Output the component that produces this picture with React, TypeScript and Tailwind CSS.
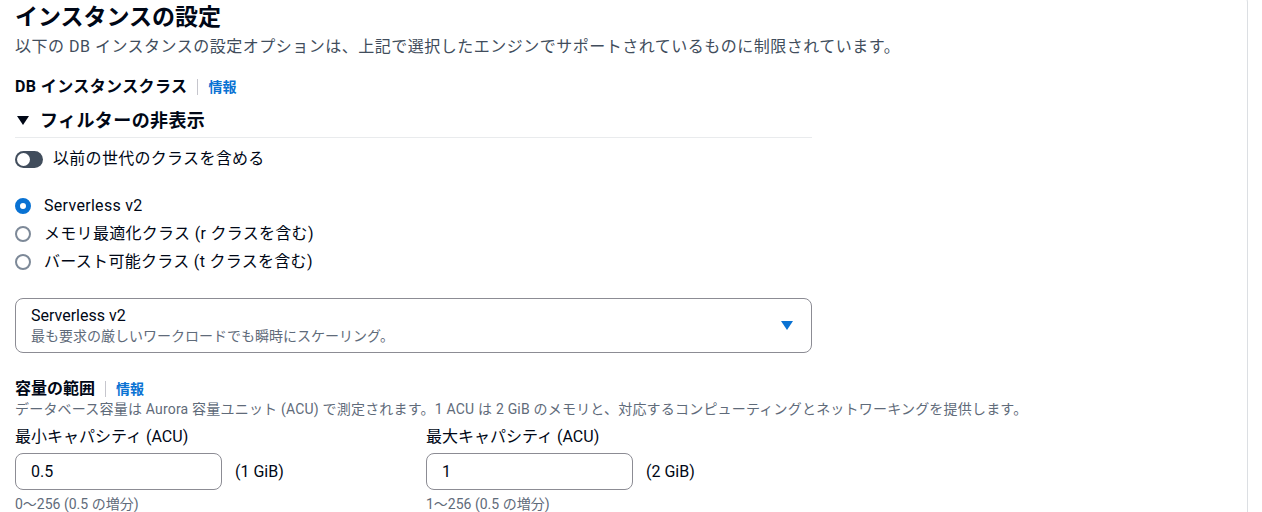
export default function App() {
  const radios = [
    { label: 'Serverless v2', checked: true },
    { label: 'メモリ最適化クラス (r クラスを含む)', checked: false },
    { label: 'バースト可能クラス (t クラスを含む)', checked: false },
  ];

  return (
    <div className="h-[512px] w-[1262px] overflow-hidden bg-white font-[family-name:Roboto,'Noto_Sans_CJK_JP',sans-serif] text-[#000716]">
      <div className="-ml-[8px] -mt-[14px] w-[1256px] rounded-[16px] border border-[#dcdfe3] pb-[40px] pl-[22px] pt-[13px]">
        <h2 className="pt-[2px] text-[23px] font-bold leading-[32px]">インスタンスの設定</h2>
        <p className="mt-[1px] text-[16px] leading-[24px] tracking-[0.5px] text-[#414d5c]">
          以下の DB インスタンスの設定オプションは、上記で選択したエンジンでサポートされているものに制限されています。
        </p>

        <div className="mt-[17px] flex h-[22px] items-center">
          <span className="text-[16px] font-bold tracking-[0.4px]">DB インスタンスクラス</span>
          <span className="mx-[10px] h-[16px] w-px bg-[#c6c6cd]" />
          <span className="text-[14px] font-bold text-[#0972d3]">情報</span>
        </div>

        <div className="mt-[9px] w-[797px] border-b border-[#e9ebed] pb-[4px]">
          <div className="flex h-[26px] items-center">
            <svg width="12" height="9" viewBox="0 0 12 9" className="ml-[2px]">
              <polygon points="0,0 12,0 6,9" fill="#000716" />
            </svg>
            <span className="ml-[11px] text-[18px] font-bold tracking-[0.4px]">フィルターの非表示</span>
          </div>
        </div>

        <div className="mt-[9px] flex h-[24px] items-center">
          <span className="flex h-[17px] w-[28px] items-center rounded-full bg-[#414d5c] px-[2px]">
            <span className="h-[13px] w-[13px] rounded-full bg-white" />
          </span>
          <span className="ml-[10px] text-[16px] tracking-[0.3px]">以前の世代のクラスを含める</span>
        </div>

        <div className="mt-[21px] flex flex-col">
          {radios.map((r) => (
            <label key={r.label} className="flex h-[28px] items-center gap-[13px]">
              {r.checked ? (
                <span className="h-[16px] w-[16px] rounded-full border-[5px] border-[#0972d3] bg-white" />
              ) : (
                <span className="h-[16px] w-[16px] rounded-full border-2 border-[#7d8998] bg-white" />
              )}
              <span className="text-[16px] tracking-[0.3px]">{r.label}</span>
            </label>
          ))}
        </div>

        <div className="mt-[22px] flex h-[55px] w-[797px] items-center justify-between rounded-[8px] border border-[#8c8c94] pl-[15px] pr-[18px]">
          <div className="flex flex-col">
            <span className="text-[16px] leading-[20px]">Serverless v2</span>
            <span className="text-[14px] leading-[20px] text-[#5f6b7a]">最も要求の厳しいワークロードでも瞬時にスケーリング。</span>
          </div>
          <svg width="12" height="9" viewBox="0 0 12 9">
            <polygon points="0,0 12,0 6,9" fill="#0972d3" />
          </svg>
        </div>

        <div className="mt-[25px] flex h-[22px] items-center">
          <span className="text-[16px] font-bold">容量の範囲</span>
          <span className="mx-[10px] h-[16px] w-px bg-[#c6c6cd]" />
          <span className="text-[14px] font-bold text-[#0972d3]">情報</span>
        </div>
        <p className="-mt-px text-[14px] leading-[20px] tracking-[0.2px] text-[#5f6b7a]">
          データベース容量は Aurora 容量ユニット (ACU) で測定されます。1 ACU は 2 GiB のメモリと、対応するコンピューティングとネットワーキングを提供します。
        </p>

        <div className="mt-[7px] grid grid-cols-[411px_411px]">
          <CapacityField label="最小キャパシティ (ACU)" value="0.5" unit="(1 GiB)" hint="0〜256 (0.5 の増分)" />
          <CapacityField label="最大キャパシティ (ACU)" value="1" unit="(2 GiB)" hint="1〜256 (0.5 の増分)" />
        </div>
      </div>
    </div>
  );
}

function CapacityField({ label, value, unit, hint }: { label: string; value: string; unit: string; hint: string }) {
  return (
    <div className="flex flex-col">
      <span className="text-[16px] leading-[22px]">{label}</span>
      <div className="mt-[5px] flex items-center">
        <div className="flex h-[37px] w-[207px] items-center rounded-[8px] border border-[#8c8c94] px-[15px] text-[16px]">
          {value}
        </div>
        <span className="ml-[13px] text-[16px]">{unit}</span>
      </div>
      <span className="mt-[4px] text-[14px] leading-[20px] text-[#5f6b7a]">{hint}</span>
    </div>
  );
}
